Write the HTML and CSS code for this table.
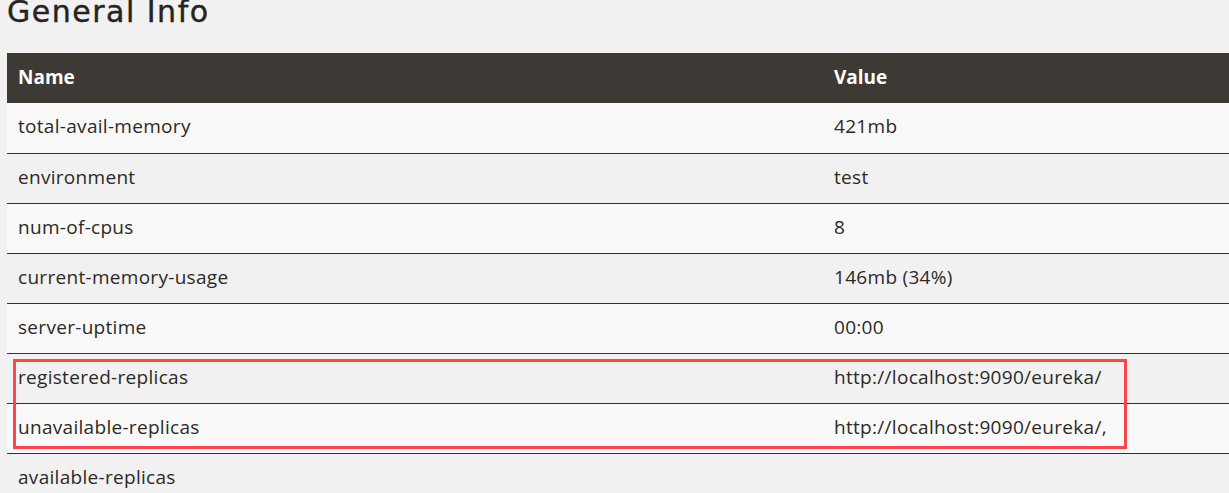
FILE: index.html
```html
<!DOCTYPE html>
<html lang="en">
<head>
<meta charset="utf-8">
<title>General Info</title>
<link rel="stylesheet" href="styles.css">
</head>
<body>
<main class="page">
  <h2 class="title">General Info</h2>
  <div class="table-wrap">
    <table class="info-table">
      <thead>
        <tr><th class="col-name">Name</th><th>Value</th></tr>
      </thead>
      <tbody>
        <tr><td>total-avail-memory</td><td>421mb</td></tr>
        <tr><td>environment</td><td>test</td></tr>
        <tr><td>num-of-cpus</td><td>8</td></tr>
        <tr><td>current-memory-usage</td><td>146mb (34%)</td></tr>
        <tr><td>server-uptime</td><td>00:00</td></tr>
        <tr><td>registered-replicas</td><td>http://localhost:9090/eureka/</td></tr>
        <tr><td>unavailable-replicas</td><td>http://localhost:9090/eureka/,</td></tr>
        <tr><td>available-replicas</td><td></td></tr>
      </tbody>
    </table>
    <div class="highlight"></div>
  </div>
</main>
</body>
</html>
```
FILE: styles.css
```css
html, body {
  margin: 0;
  padding: 0;
  background: #f1f1f1;
  overflow: hidden;
}
.page {
  padding-left: 7px;
  color: #2d2a26;
  font-family: "Open Sans", "DejaVu Sans", sans-serif;
}
.title {
  margin: -3px 0 0 0;
  height: 56px;
  font-family: "DejaVu Sans", sans-serif;
  font-weight: 400;
  font-size: 30px;
  line-height: 30px;
  letter-spacing: 1.5px;
  color: #262320;
  -webkit-text-stroke: 0.4px #262320;
}
.table-wrap {
  position: relative;
}
.info-table {
  width: 1260px;
  border-collapse: collapse;
  font-size: 19px;
  letter-spacing: 0.3px;
}
.info-table th,
.info-table td {
  height: 50px;
  padding: 0 11px 3px 11px;
  text-align: left;
  vertical-align: middle;
  box-sizing: border-box;
}
.info-table th {
  background: #3d3934;
  color: #fff;
  font-weight: 700;
  letter-spacing: 0;
}
.col-name {
  width: 816px;
}
.info-table tbody tr {
  border-bottom: 1px solid #333;
}
.info-table tbody tr:nth-child(odd) {
  background: #f9f9f9;
}
.highlight {
  position: absolute;
  left: 6px;
  top: 306px;
  width: 1108px;
  height: 84px;
  border: 3px solid #ff4545;
}
```
